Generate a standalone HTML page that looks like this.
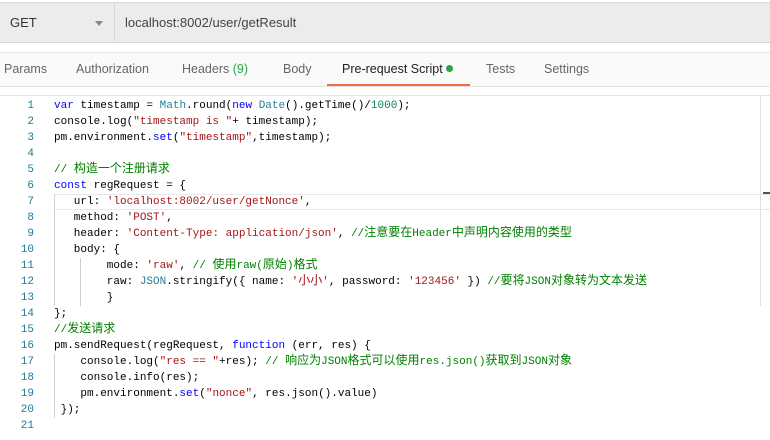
<!DOCTYPE html>
<html><head><meta charset="utf-8"><style>
body{margin:0;width:770px;height:439px;overflow:hidden;background:#fff;font-family:"Liberation Sans","Noto Sans CJK SC",sans-serif;position:relative}
.top{position:absolute;left:0;top:2px;width:770px;height:39px;background:#ececec;border-top:1px solid #d8d8d8;border-bottom:1px solid #d8d8d8}
.get{position:absolute;left:10px;top:12px;font-size:13px;color:#333}
.arr{position:absolute;left:95px;top:18px;width:0;height:0;border-left:4px solid transparent;border-right:4px solid transparent;border-top:5px solid #888}
.sep{position:absolute;left:114px;top:0;width:1px;height:39px;background:#d8d8d8}
.url{position:absolute;left:125px;top:12px;font-size:13px;color:#444}
.tabs{position:absolute;left:0;top:52px;width:770px;height:33px;background:#fafafa;border-top:1px solid #e4e4e4;border-bottom:1px solid #e4e4e4}
.tab{position:absolute;top:9px;font-size:12.5px;color:#666}
.ul{position:absolute;left:327px;top:31px;width:143px;height:2px;background:#f26b3a}
.code{position:absolute;left:0;top:95px;width:770px;height:344px;border-top:1px solid #e4e4e4}
.ln{position:absolute;left:0;width:34px;text-align:right;font:11px/16px "Liberation Mono",monospace;color:#237893}
.c{position:absolute;left:54px;font:11px/16px "Liberation Mono","Noto Sans CJK SC",monospace;color:#000;white-space:pre}
.z{font-size:12px;line-height:10px}
.k{color:#0000ff}.t{color:#267f99}.n{color:#098658}.s{color:#a31515}.g{color:#008000}
.guide{position:absolute;width:1px;background:#d0d0d0}
</style></head><body>
<div class="top"><span class="get">GET</span><div class="arr"></div><div class="sep"></div><span class="url">localhost:8002/user/getResult</span></div>
<div class="tabs">
<span class="tab" style="left:4px">Params</span>
<span class="tab" style="left:76px">Authorization</span>
<span class="tab" style="left:182px">Headers <span style="color:#26a644">(9)</span></span>
<span class="tab" style="left:283px">Body</span>
<span class="tab" style="left:342px;color:#222">Pre-request Script <span style="display:inline-block;width:7px;height:7px;border-radius:50%;background:#26a644;vertical-align:1px"></span></span>
<span class="tab" style="left:486px">Tests</span>
<span class="tab" style="left:544px">Settings</span>
<div class="ul"></div>
</div>
<div style="position:absolute;left:760px;top:96px;width:1px;height:210px;background:#e0e0e0"></div>
<div style="position:absolute;left:763px;top:192px;width:7px;height:2px;background:#555"></div>
<div style="position:absolute;left:54px;top:194px;width:716px;height:14px;border-top:1px solid #e8e8e8;border-bottom:1px solid #e8e8e8"></div>
<div class="guide" style="left:54px;top:194px;height:112px"></div>
<div class="guide" style="left:80px;top:258px;height:48px"></div>
<div class="guide" style="left:54px;top:354px;height:64px"></div>
<div class="code"></div>
<div class="ln" style="top:98px">1</div><div class="c" style="top:98px"><span class="k">var</span> timestamp = <span class="t">Math</span>.round(<span class="k">new</span> <span class="t">Date</span>().getTime()/<span class="n">1000</span>);</div>
<div class="ln" style="top:114px">2</div><div class="c" style="top:114px">console.log(<span class="s">"timestamp is "</span>+ timestamp);</div>
<div class="ln" style="top:130px">3</div><div class="c" style="top:130px">pm.environment.<span class="k">set</span>(<span class="s">"timestamp"</span>,timestamp);</div>
<div class="ln" style="top:146px">4</div>
<div class="ln" style="top:162px">5</div><div class="c g" style="top:162px">// <span class="z">构造一个注册请求</span></div>
<div class="ln" style="top:178px">6</div><div class="c" style="top:178px"><span class="k">const</span> regRequest = {</div>
<div class="ln" style="top:194px">7</div><div class="c" style="top:194px">   url: <span class="s">'localhost:8002/user/getNonce'</span>,</div>
<div class="ln" style="top:210px">8</div><div class="c" style="top:210px">   method: <span class="s">'POST'</span>,</div>
<div class="ln" style="top:226px">9</div><div class="c" style="top:226px">   header: <span class="s">'Content-Type: application/json'</span>, <span class="g">//<span class="z">注意要在</span>Header<span class="z">中声明内容使用的类型</span></span></div>
<div class="ln" style="top:242px">10</div><div class="c" style="top:242px">   body: {</div>
<div class="ln" style="top:258px">11</div><div class="c" style="top:258px">        mode: <span class="s">'raw'</span>, <span class="g">// <span class="z">使用</span>raw(<span class="z">原始</span>)<span class="z">格式</span></span></div>
<div class="ln" style="top:274px">12</div><div class="c" style="top:274px">        raw: <span class="t">JSON</span>.stringify({ name: <span class="s">'<span class="z">小小</span>'</span>, password: <span class="s">'123456'</span> }) <span class="g">//<span class="z">要将</span>JSON<span class="z">对象转为文本发送</span></span></div>
<div class="ln" style="top:290px">13</div><div class="c" style="top:290px">        }</div>
<div class="ln" style="top:306px">14</div><div class="c" style="top:306px">};</div>
<div class="ln" style="top:322px">15</div><div class="c g" style="top:322px">//<span class="z">发送请求</span></div>
<div class="ln" style="top:338px">16</div><div class="c" style="top:338px">pm.sendRequest(regRequest, <span class="k">function</span> (err, res) {</div>
<div class="ln" style="top:354px">17</div><div class="c" style="top:354px">    console.log(<span class="s">"res == "</span>+res); <span class="g">// <span class="z">响应为</span>JSON<span class="z">格式可以使用</span>res.json()<span class="z">获取到</span>JSON<span class="z">对象</span></span></div>
<div class="ln" style="top:370px">18</div><div class="c" style="top:370px">    console.info(res);</div>
<div class="ln" style="top:386px">19</div><div class="c" style="top:386px">    pm.environment.<span class="k">set</span>(<span class="s">"nonce"</span>, res.json().value)</div>
<div class="ln" style="top:402px">20</div><div class="c" style="top:402px"> });</div>
<div class="ln" style="top:418px">21</div>
</body></html>
